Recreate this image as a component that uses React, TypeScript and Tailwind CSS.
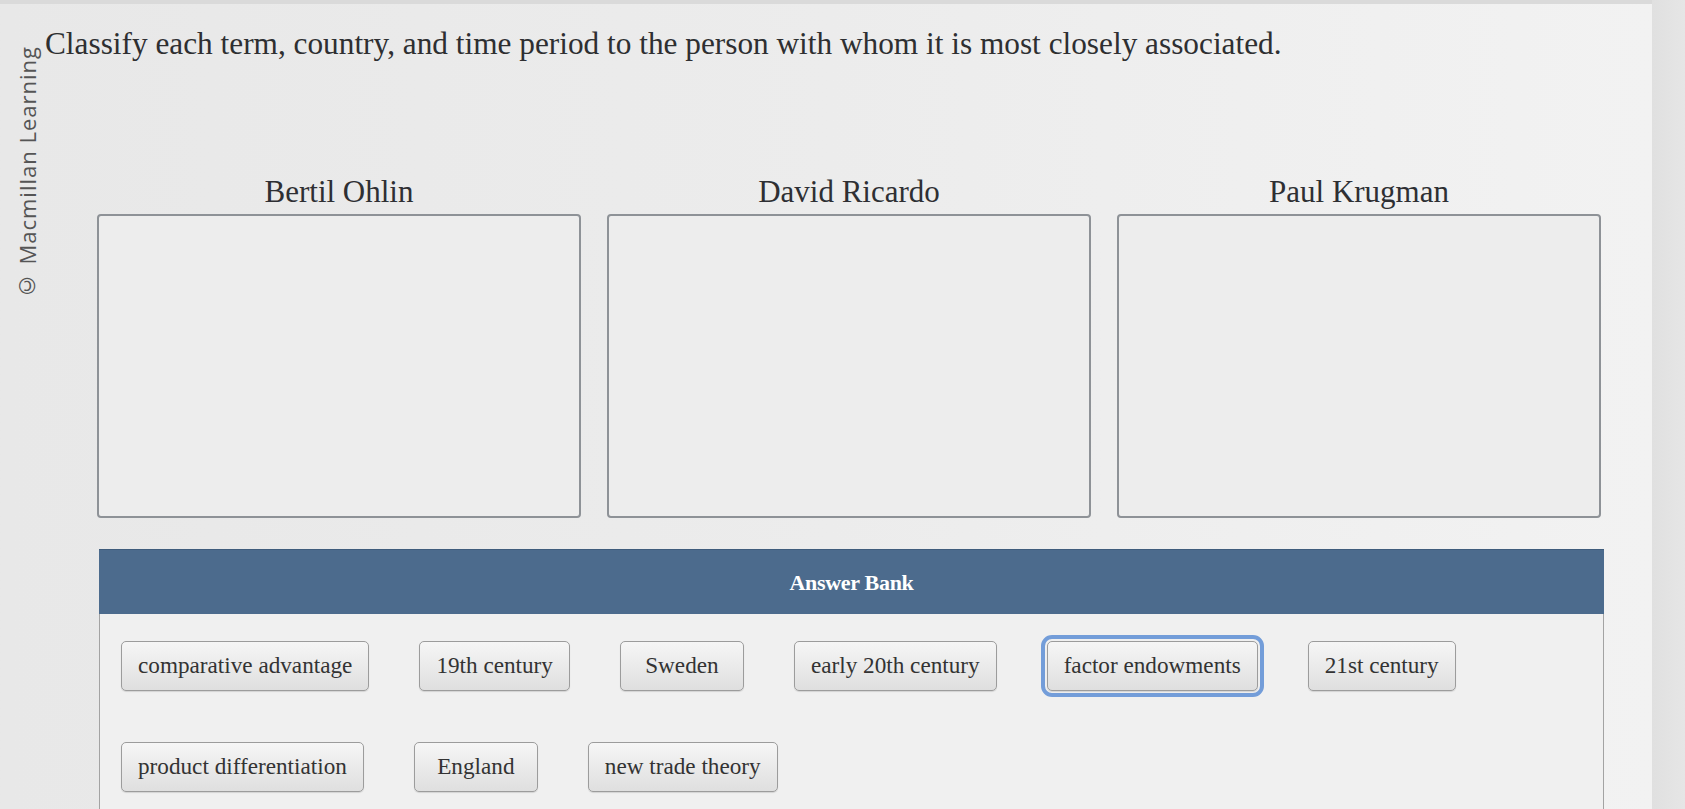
import React from "react";

const persons = ["Bertil Ohlin", "David Ricardo", "Paul Krugman"];

const answers = [
  { label: "comparative advantage" },
  { label: "19th century" },
  { label: "Sweden" },
  { label: "early 20th century" },
  { label: "factor endowments", focused: true },
  { label: "21st century" },
  { label: "product differentiation" },
  { label: "England" },
  { label: "new trade theory" },
];

function Chip({ label, focused }: { label: string; focused?: boolean }) {
  return (
    <div
      className={`h-[50px] min-w-[124px] px-4 flex items-center justify-center border border-[#9c9c9c] rounded-[5px] bg-gradient-to-b from-[#f6f6f6] to-[#dfdfdf] shadow-[0_1px_1px_rgba(0,0,0,0.12)] text-[23.2px] leading-none text-[#333] whitespace-nowrap ${
        focused ? "outline-4 outline-solid outline-[#739dd9] outline-offset-[2px]" : ""
      }`}
    >
      {label}
    </div>
  );
}

export default function App() {
  return (
    <div
      className="w-[1685px] h-[809px] overflow-hidden flex bg-[#e3e3e3]"
      style={{ fontFamily: '"Liberation Serif", "Times New Roman", serif' }}
    >
      <div className="w-[1652px] shrink-0 h-full flex border-t-4 border-[#dadada] bg-gradient-to-r from-[#e8e8e8] via-[#ececec] to-[#f2f2f2]">
        {/* watermark */}
        <div className="w-[45px] shrink-0 pl-[12px] pt-[42px]">
          <div
            className="[writing-mode:vertical-rl] rotate-180 text-[22px] leading-[30px] tracking-[1px] text-[#555]"
            style={{ fontFamily: '"Open Sans", "DejaVu Sans", sans-serif' }}
          >
            © Macmillan Learning
          </div>
        </div>

        {/* main */}
        <div className="flex-1 flex flex-col">
          <h1 className="mt-[22px] text-[31.3px] leading-[36px] font-normal text-[#2e2f31] whitespace-nowrap">
            Classify each term, country, and time period to the person with whom it is most closely associated.
          </h1>

          <div className="ml-[52px] w-[1504px] mt-[112px] grid grid-cols-3 gap-[26px]">
            {persons.map((p) => (
              <div key={p} className="flex flex-col">
                <div className="text-center text-[31px] leading-[36px] text-[#2e2f33] mb-[4px]">{p}</div>
                <div className="h-[304px] border-2 border-[#8e9297] rounded-[4px] bg-[#ededed]" />
              </div>
            ))}
          </div>

          {/* answer bank */}
          <div className="ml-[54px] w-[1505px] mt-[31px] flex-1 flex flex-col">
            <div className="h-[65px] shrink-0 flex items-center justify-center bg-[#4c6b8d] border-t border-[#3f5c7c]">
              <span className="text-white font-bold text-[22px] tracking-[-0.3px]">Answer Bank</span>
            </div>
            <div className="flex-1 bg-[#f0f0f0] border-x border-[#a3a3a3] pl-[21px] pt-[27px]">
              <div className="flex flex-wrap gap-x-[50px] gap-y-[51px]">
                {answers.map((a) => (
                  <Chip key={a.label} label={a.label} focused={a.focused} />
                ))}
              </div>
            </div>
          </div>
        </div>
      </div>
      <div className="flex-1 h-full bg-gradient-to-r from-[#e0e0e0] to-[#e6e6e6]" />
    </div>
  );
}
